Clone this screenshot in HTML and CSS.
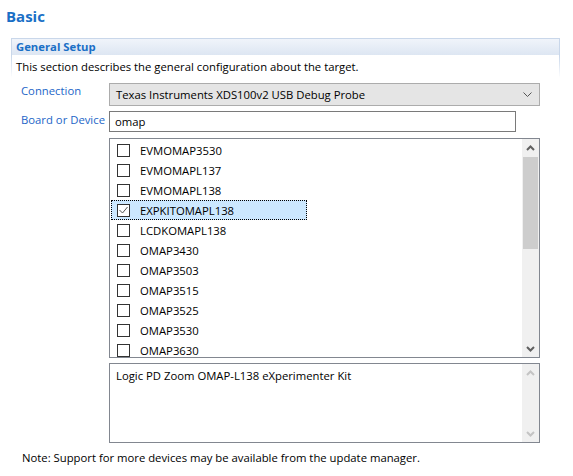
FILE: index.html
```
<!DOCTYPE html>
<html>
<head>
<meta charset="utf-8">
<link rel="stylesheet" href="styles.css">
</head>
<body>
<div class="page">
  <h1 class="title">Basic</h1>
  <section class="section">
    <div class="section-head">General Setup</div>
    <p class="desc">This section describes the general configuration about the target.</p>
    <div class="form">
      <label class="lbl lbl-conn">Connection</label>
      <div class="combo">
        <span class="combo-text">Texas Instruments XDS100v2 USB Debug Probe</span>
        <svg class="combo-arrow" width="9" height="5" viewBox="0 0 9 5"><polyline points="0.5,0.5 4.5,4.5 8.5,0.5" fill="none" stroke="#555" stroke-width="1"/></svg>
      </div>
      <label class="lbl lbl-board">Board or Device</label>
      <div class="field"><input class="input" type="text" value="omap"></div>
      <div></div>
      <div class="list">
        <ul class="items">
          <li class="item"><span class="cb"></span>EVMOMAP3530</li>
          <li class="item"><span class="cb"></span>EVMOMAPL137</li>
          <li class="item"><span class="cb"></span>EVMOMAPL138</li>
          <li class="item sel"><span class="cb"><svg width="11" height="11" viewBox="0 0 11 11"><polyline points="1.5,5 4.5,8 9.5,2" fill="none" stroke="#555" stroke-width="1"/></svg></span>EXPKITOMAPL138</li>
          <li class="item"><span class="cb"></span>LCDKOMAPL138</li>
          <li class="item"><span class="cb"></span>OMAP3430</li>
          <li class="item"><span class="cb"></span>OMAP3503</li>
          <li class="item"><span class="cb"></span>OMAP3515</li>
          <li class="item"><span class="cb"></span>OMAP3525</li>
          <li class="item"><span class="cb"></span>OMAP3530</li>
          <li class="item"><span class="cb"></span>OMAP3630</li>
        </ul>
        <div class="sbar">
          <div class="sbtn"><svg width="9" height="6" viewBox="0 0 9 6"><polyline points="1,5 4.5,1.5 8,5" fill="none" stroke="#606060" stroke-width="2"/></svg></div>
          <div class="track"><div class="thumb"></div></div>
          <div class="sbtn"><svg width="9" height="6" viewBox="0 0 9 6"><polyline points="1,1 4.5,4.5 8,1" fill="none" stroke="#606060" stroke-width="2"/></svg></div>
        </div>
      </div>
      <div></div>
      <div class="details">
        <div class="details-text">Logic PD Zoom OMAP-L138 eXperimenter Kit</div>
        <div class="sbar">
          <div class="sbtn"><svg width="9" height="6" viewBox="0 0 9 6"><polyline points="1,5 4.5,1.5 8,5" fill="none" stroke="#c4c4c4" stroke-width="2"/></svg></div>
          <div class="track"></div>
          <div class="sbtn"><svg width="9" height="6" viewBox="0 0 9 6"><polyline points="1,1 4.5,4.5 8,1" fill="none" stroke="#c4c4c4" stroke-width="2"/></svg></div>
        </div>
      </div>
    </div>
  </section>
  <p class="note">Note: Support for more devices may be available from the update manager.</p>
</div>
</body>
</html>
```

FILE: styles.css
```
* { box-sizing: border-box; }
html, body { margin: 0; padding: 0; background: #fff; }
body {
  font-family: "Segoe UI", "Open Sans", "Noto Sans", sans-serif;
  font-size: 11.3px;
  color: #000;
}
.page { width: 573px; height: 476px; overflow: hidden; }
.title {
  margin: 0;
  padding: 6px 0 0 6px;
  height: 31px;
  font-size: 15px;
  font-weight: 700;
  line-height: 20px;
  color: #1a6fc6;
}
.section {
  margin: 7px 13px 0 11px;
  border: 1px solid #c9d7ea;
  border-bottom: none;
  border-radius: 3px 3px 0 0;
  border-image: linear-gradient(#c9d7ea 0, #c9d7ea 18px, #fff 40px) 1;
}
.section-head {
  height: 16px;
  padding-left: 4px;
  font-weight: 700;
  line-height: 16px;
  color: #1a6fc6;
  background: linear-gradient(#f0f4fa, #dde6f2);
}
.desc {
  margin: 0;
  padding: 3px 0 0 4px;
  height: 24px;
  line-height: 17px;
  white-space: nowrap;
}
.form {
  display: grid;
  grid-template-columns: 88px 431px;
  row-gap: 5px;
  padding-left: 9px;
  margin-top: 4px;
}
.lbl { color: #2366c8; line-height: 17px; white-space: nowrap; }
.lbl-conn { margin-top: -1px; }
.lbl-board { padding-top: 0; }
.combo {
  height: 23px;
  border: 1px solid #acacac;
  background: #e5e5e5;
  display: flex;
  align-items: center;
  justify-content: space-between;
  padding: 0 6px 0 6px;
}
.combo-text { line-height: 17px; white-space: nowrap; }
.combo-arrow { display: block; margin-right: 1px; }
.field { height: 21px; }
.input {
  display: block;
  width: 407px;
  height: 21px;
  margin: 0;
  border: 1px solid #7a7a7a;
  padding: 0 5px;
  font: inherit;
  color: #000;
  outline: none;
  background: #fff;
}
.list {
  margin-top: 1px;
  height: 220px;
  border: 1px solid #828790;
  display: flex;
  overflow: hidden;
}
.items {
  list-style: none;
  margin: 0;
  padding: 1px 0 0 1px;
  flex: 1;
  overflow: hidden;
}
.item {
  height: 20px;
  width: 196px;
  display: flex;
  align-items: center;
  padding-left: 5px;
  line-height: 17px;
  border: 1px solid transparent;
  white-space: nowrap;
}
.item.sel {
  background: #cce8ff;
  border: 1px dotted #000;
}
.cb {
  width: 13px;
  height: 13px;
  border: 1px solid #333;
  background: #fff;
  margin-right: 10px;
  display: flex;
  align-items: center;
  justify-content: center;
  flex: none;
}
.cb svg { display: block; }
.sbar {
  width: 17px;
  display: flex;
  flex-direction: column;
  background: #f0f0f0;
  flex: none;
}
.sbtn {
  height: 17px;
  display: flex;
  align-items: center;
  justify-content: center;
  flex: none;
}
.sbtn svg { display: block; }
.track { flex: 1; }
.thumb {
  margin: 1px 1px 0 1px;
  height: 92px;
  background: #cdcdcd;
}
.details {
  height: 80px;
  border: 1px solid #828790;
  display: flex;
}
.details-text {
  flex: 1;
  padding: 3px 0 0 6px;
  line-height: 17px;
}
.note {
  margin: 0;
  padding: 6px 0 0 22px;
  line-height: 17px;
  white-space: nowrap;
}
```
